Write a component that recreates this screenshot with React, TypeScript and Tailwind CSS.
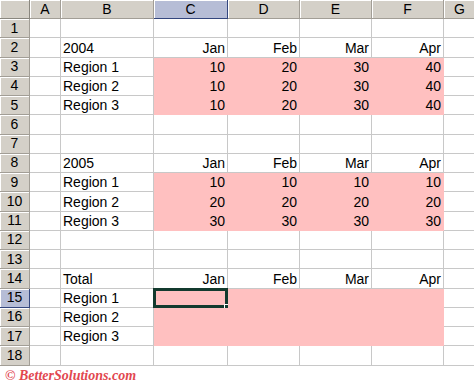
const cols = ["A", "B", "C", "D", "E", "F", "G"];

type Row = { b?: string; vals?: string[]; pink?: boolean };

const rows: Row[] = [
  {},
  { b: "2004", vals: ["Jan", "Feb", "Mar", "Apr"] },
  { b: "Region 1", vals: ["10", "20", "30", "40"], pink: true },
  { b: "Region 2", vals: ["10", "20", "30", "40"], pink: true },
  { b: "Region 3", vals: ["10", "20", "30", "40"], pink: true },
  {},
  {},
  { b: "2005", vals: ["Jan", "Feb", "Mar", "Apr"] },
  { b: "Region 1", vals: ["10", "10", "10", "10"], pink: true },
  { b: "Region 2", vals: ["20", "20", "20", "20"], pink: true },
  { b: "Region 3", vals: ["30", "30", "30", "30"], pink: true },
  {},
  {},
  { b: "Total", vals: ["Jan", "Feb", "Mar", "Apr"] },
  { b: "Region 1", vals: ["", "", "", ""], pink: true },
  { b: "Region 2", vals: ["", "", "", ""], pink: true },
  { b: "Region 3", vals: ["", "", "", ""], pink: true },
  {},
];

function Cell({ text, right, pink, selected }: { text?: string; right?: boolean; pink?: boolean; selected?: boolean }) {
  return (
    <div
      className={
        "relative flex items-end px-[2px] pb-[1px] border-r border-b leading-none " +
        (right ? "justify-end " : "justify-start ") +
        (pink ? "bg-[#ffc0c0] border-[#ffc0c0]" : "bg-white border-[#c8c8c8]")
      }
    >
      <span className="pb-[1px]">{text}</span>
      {selected && (
        <>
          <div className="absolute -left-px -top-px -right-px -bottom-px border-[3px] border-[#133a2e]" />
          <div className="absolute -right-[3px] -bottom-[3px] w-[6px] h-[6px] bg-[#133a2e] border border-white" />
        </>
      )}
    </div>
  );
}

export default function App() {
  return (
    <div className="w-[474px] h-[383px] bg-white overflow-hidden font-['Liberation_Sans',Arial,sans-serif] text-[14px] text-black">
      <div className="grid grid-cols-[30px_31px_93px_74px_72px_72px_72px_32px] grid-rows-[19px_repeat(18,19.25px)] w-[476px]">
        <div className="bg-[#d4d0c8] border-r border-b border-[#8a877f] shadow-[inset_1px_1px_0_#fff]" />
        {cols.map((c) => (
          <div
            key={c}
            className={
              "flex items-center justify-center text-[14px] border-r border-b shadow-[inset_1px_1px_0_#fff] " +
              (c === "C" ? "bg-[#b6bdd6] border-[#33467e]" : "bg-[#d4d0c8] border-[#a29e96]")
            }
          >
            {c}
          </div>
        ))}
        {rows.map((r, i) => {
          const n = i + 1;
          return [
            <div
              key={"h" + n}
              className={
                "flex items-center justify-center border-r border-b shadow-[inset_1px_1px_0_#fff] " +
                (n === 15 ? "bg-[#b6bdd6] border-[#33467e]" : "bg-[#d4d0c8] border-[#a29e96]")
              }
            >
              {n}
            </div>,
            <Cell key={"a" + n} />,
            <Cell key={"b" + n} text={r.b} />,
            ...[0, 1, 2, 3].map((k) => (
              <Cell
                key={"v" + n + k}
                text={r.vals ? r.vals[k] : undefined}
                right
                pink={r.pink}
                selected={n === 15 && k === 0}
              />
            )),
            <Cell key={"g" + n} />,
          ];
        })}
      </div>
      <div className="pl-[5px] pt-[3px] font-['Liberation_Serif',serif] italic font-bold text-[14px] text-[#e2474f] leading-none">
        © BetterSolutions.com
      </div>
    </div>
  );
}
